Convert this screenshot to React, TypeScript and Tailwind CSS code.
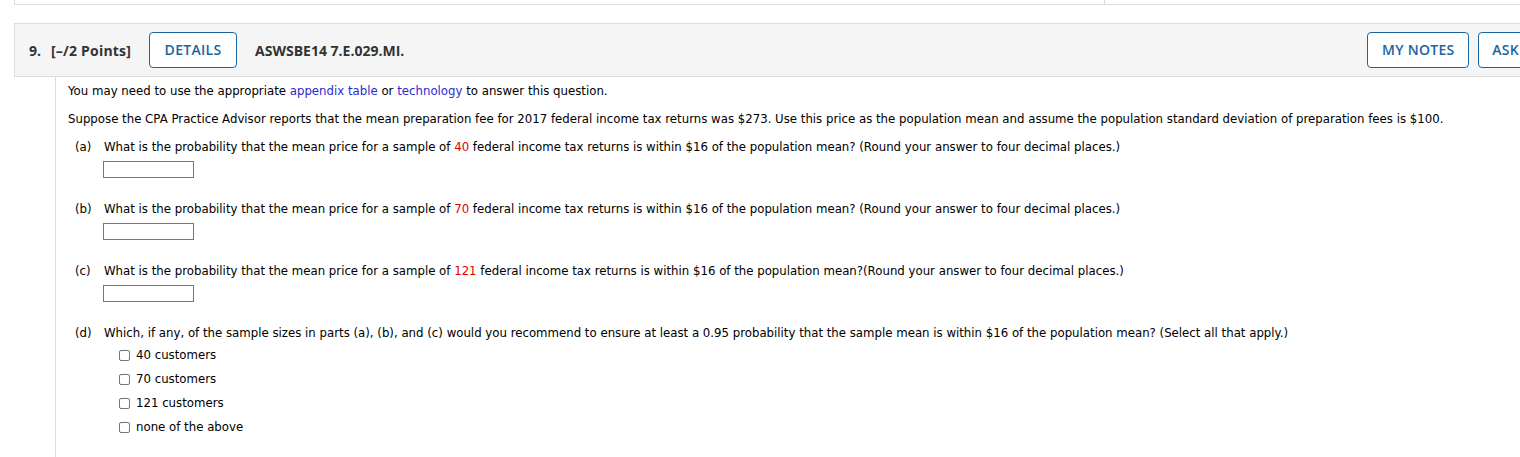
import React from 'react';

const Num = ({ children }: { children: React.ReactNode }) => (
  <span className="text-[#e00000]">{children}</span>
);

const Blank = () => (
  <div className="mt-[6px] ml-[35px] w-[91px] h-[17px] border border-[#767676] bg-white" />
);

const Part = ({ label, children }: { label: string; children: React.ReactNode }) => (
  <div className="flex leading-[16px]">
    <span className="w-[36px] shrink-0 pl-[7px]">{label}</span>
    <span>{children}</span>
  </div>
);

const Choice = ({ text }: { text: string }) => (
  <div className="flex items-center h-[24px] pl-[51px]">
    <span className="w-[11px] h-[11px] border border-[#767676] rounded-[2px] bg-white" />
    <span className="ml-[6px] leading-[16px]">{text}</span>
  </div>
);

const OutlineButton = ({ children, className = '' }: { children: React.ReactNode; className?: string }) => (
  <button
    className={`h-[36px] shrink-0 whitespace-nowrap overflow-hidden border border-[#1a65a0] rounded-[4px] bg-white text-[#1a65a0] text-[14px] font-semibold tracking-[0.3px] pb-[1px] ${className}`}
  >
    {children}
  </button>
);

const App: React.FC = () => {
  return (
    <div className="w-[1520px] h-[457px] overflow-hidden bg-white text-black" style={{ fontFamily: '"DejaVu Sans", Verdana, sans-serif' }}>
      {/* previous question box, cut off at the top */}
      <div className="ml-[14px] h-[5px] border-l border-b border-[#dddddd] flex">
        <div className="w-[1090px] border-r border-[#dddddd]" />
      </div>

      {/* question header */}
      <div
        className="mt-[18px] ml-[14px] w-[1640px] h-[54px] flex items-center bg-[#f5f5f5] border-t border-b border-l border-[#dddddd] pl-[14px] pr-[14px] text-[#333]"
        style={{ fontFamily: '"Open Sans", sans-serif' }}
      >
        <span className="text-[14px] font-bold">9.</span>
        <span className="ml-[10px] text-[14px] font-bold tracking-[0.2px]">[–/2 Points]</span>
        <OutlineButton className="ml-[18px] w-[88px]">DETAILS</OutlineButton>
        <span className="ml-[18px] text-[14px] font-bold">ASWSBE14 7.E.029.MI.</span>
        <div className="ml-[963px] flex gap-[9px]">
          <OutlineButton className="w-[102px]">MY NOTES</OutlineButton>
          <OutlineButton className="w-[160px] text-left pl-[13px]">ASK YOUR TEACHER</OutlineButton>
        </div>
      </div>

      {/* question body */}
      <div className="ml-[55px] h-[400px] border-l border-[#dddddd] pl-[12px] pt-[6px] text-[11.75px]">
        <p className="leading-[16px]">
          You may need to use the appropriate <span className="text-[#2b2bd0]">appendix table</span> or{' '}
          <span className="text-[#2b2bd0]">technology</span> to answer this question.
        </p>
        <p className="mt-[12px] leading-[16px]">
          Suppose the CPA Practice Advisor reports that the mean preparation fee for 2017 federal income tax returns was $273. Use this price as the population mean and assume the population standard deviation of preparation fees is $100.
        </p>

        <div className="mt-[12px]">
          <Part label="(a)">
            What is the probability that the mean price for a sample of <Num>40</Num> federal income tax returns is within $16 of the population mean? (Round your answer to four decimal places.)
          </Part>
          <Blank />
        </div>

        <div className="mt-[23px]">
          <Part label="(b)">
            What is the probability that the mean price for a sample of <Num>70</Num> federal income tax returns is within $16 of the population mean? (Round your answer to four decimal places.)
          </Part>
          <Blank />
        </div>

        <div className="mt-[23px]">
          <Part label="(c)">
            What is the probability that the mean price for a sample of <Num>121</Num> federal income tax returns is within $16 of the population mean?(Round your answer to four decimal places.)
          </Part>
          <Blank />
        </div>

        <div className="mt-[23px]">
          <Part label="(d)">
            Which, if any, of the sample sizes in parts (a), (b), and (c) would you recommend to ensure at least a 0.95 probability that the sample mean is within $16 of the population mean? (Select all that apply.)
          </Part>
          <div className="mt-[2px]">
            <Choice text="40 customers" />
            <Choice text="70 customers" />
            <Choice text="121 customers" />
            <Choice text="none of the above" />
          </div>
        </div>
      </div>
    </div>
  );
};

export default App;
